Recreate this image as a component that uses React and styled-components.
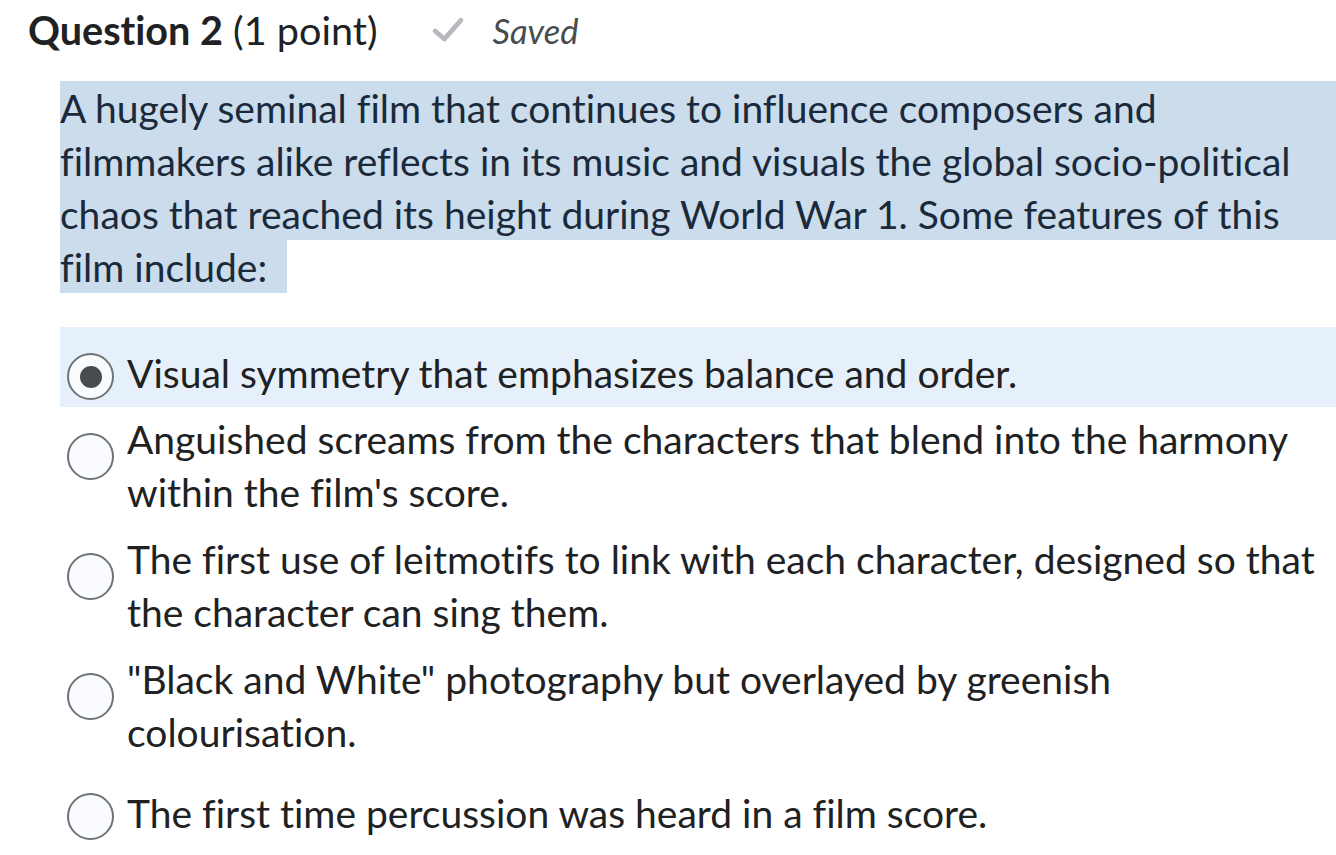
import React from 'react'
import styled, { createGlobalStyle } from 'styled-components'

const options = [
    { text: 'Visual symmetry that emphasizes balance and order.', checked: true, multi: false },
    { text: "Anguished screams from the characters that blend into the harmony within the film's score.", multi: true },
    { text: 'The first use of leitmotifs to link with each character, designed so that the character can sing them.', multi: true },
    { text: '"Black and White" photography but overlayed by greenish colourisation.', multi: true },
    { text: 'The first time percussion was heard in a film score.', multi: false },
]

function App() {
    return (
        <Page>
            <GlobalStyle />
            <Header>
                <Title>
                    <strong>Question 2</strong> (1 point)
                </Title>
                <SavedStatus>
                    <CheckIcon viewBox="0 0 30 24" aria-hidden="true">
                        <path d="M3 13 L11.5 20.5 L27 3" />
                    </CheckIcon>
                    <SavedText>Saved</SavedText>
                </SavedStatus>
            </Header>
            <Body>
                <Prompt>
                    <Highlight>
                        A hugely seminal film that continues to influence composers and filmmakers alike reflects in its music and visuals the global socio-political chaos that reached its height during World War 1. Some features of this film include:{'\u00a0\u00a0'}
                    </Highlight>
                </Prompt>
                <Choices role="radiogroup">
                    {options.map((o) => (
                        <Choice key={o.text} $selected={o.checked}>
                            <Radio $checked={o.checked} role="radio" aria-checked={!!o.checked} />
                            <ChoiceText $multi={o.multi}>{o.text}</ChoiceText>
                        </Choice>
                    ))}
                </Choices>
            </Body>
        </Page>
    )
}

export default App

const GlobalStyle = createGlobalStyle`
    html, body {
        margin: 0;
        background: #ffffff;
    }
    body {
        font-family: Lato, "Noto Sans", sans-serif;
        color: #202122;
        font-variant-ligatures: none;
        font-feature-settings: "liga" 0, "clig" 0, "dlig" 0;
    }
`

const Page = styled.div`
    width: 1336px;
    height: 855px;
    overflow: hidden;
`

const Header = styled.div`
    display: flex;
    align-items: center;
    gap: 55px;
    padding: 6px 0 0 28px;
    height: 48px;
`

const Title = styled.h2`
    margin: 0;
    font-size: 39.6px;
    font-weight: 400;
    line-height: 48px;
    color: #202122;

    strong {
        font-weight: 700;
    }
`

const SavedStatus = styled.div`
    display: flex;
    align-items: center;
    gap: 28px;
`

const CheckIcon = styled.svg`
    width: 32px;
    height: 26px;
    fill: none;
    stroke: #b6babe;
    stroke-width: 4.5;
    stroke-linecap: round;
    stroke-linejoin: round;
`

const SavedText = styled.span`
    font-size: 34.5px;
    font-style: italic;
    color: #494c4e;
`

const Body = styled.div`
    padding: 27px 0 0 60px;
`

const Prompt = styled.p`
    margin: 0;
    font-size: 39px;
    line-height: 53px;
    color: #1b2a3a;
    background: linear-gradient(#cbdcec, #cbdcec) 0 0 / 100% calc(100% - 53px) no-repeat;
`

const Highlight = styled.span`
    background: #cbdcec;
    padding: 3.5px 0;
    box-decoration-break: clone;
    -webkit-box-decoration-break: clone;
`

const Choices = styled.div`
    margin-top: 34px;
    display: flex;
    flex-direction: column;
`

const Choice = styled.label`
    display: flex;
    align-items: flex-start;
    gap: 13px;
    padding: 2px 0 7px 7px;
    background: ${(p) => (p.$selected ? '#e6f0fa' : 'transparent')};
`

const Radio = styled.span`
    position: relative;
    flex: 0 0 auto;
    box-sizing: border-box;
    width: 47px;
    height: 47px;
    margin-top: 24px;
    border-radius: 50%;
    border: 2px solid #6e7376;
    background: #f9fbff;

    &::after {
        content: "";
        display: ${(p) => (p.$checked ? 'block' : 'none')};
        position: absolute;
        left: 50%;
        top: 50%;
        width: 22px;
        height: 22px;
        margin: -11px 0 0 -11px;
        border-radius: 50%;
        background: #494c4e;
    }
`

const ChoiceText = styled.span`
    font-size: 39px;
    line-height: 53px;
    color: #202122;
    padding: ${(p) => (p.$multi ? '4px 0 1px' : '18px 0 0')};
`
